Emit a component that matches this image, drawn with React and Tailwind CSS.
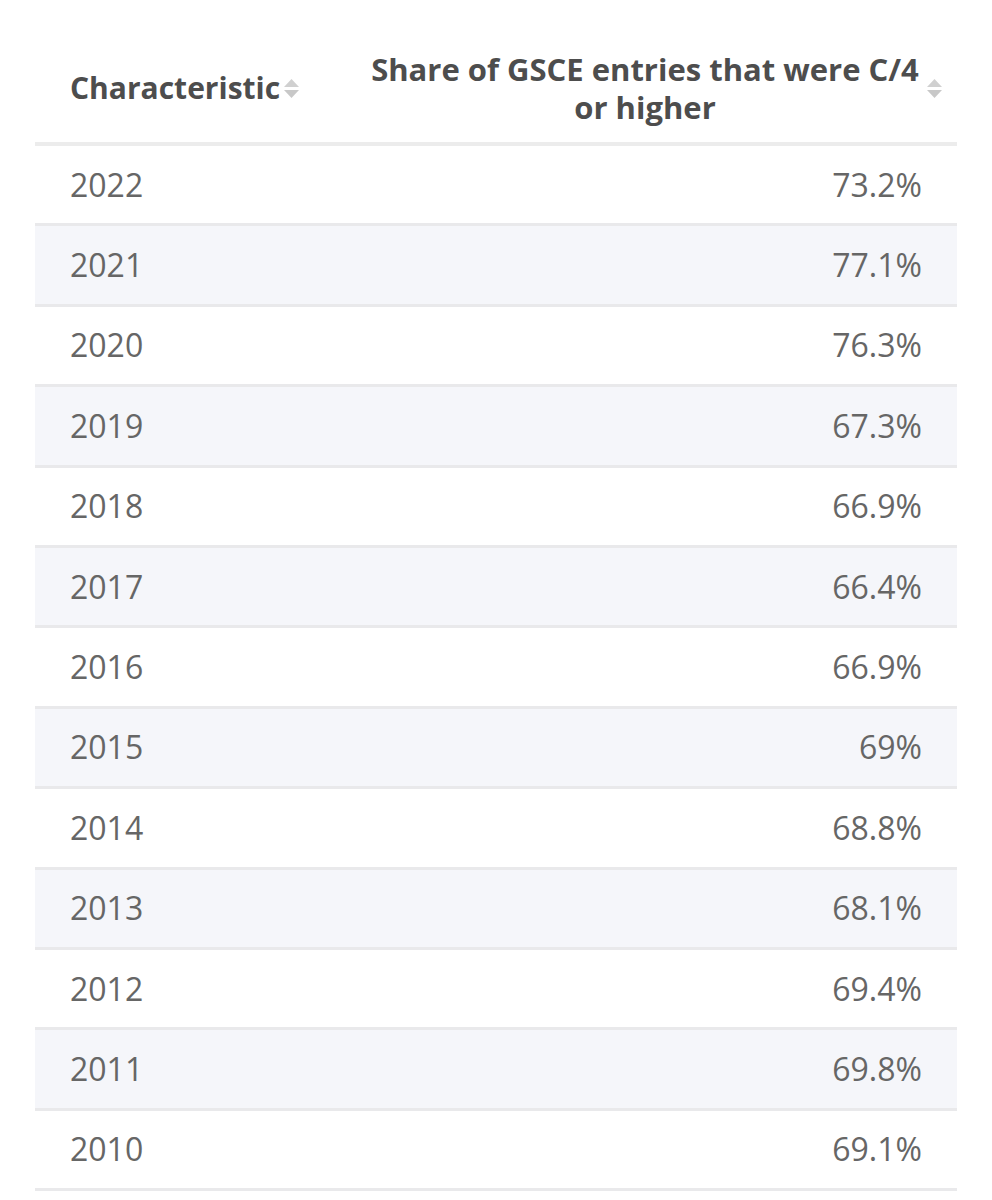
import React from "react";

const rows = [
  ["2022", "73.2%"],
  ["2021", "77.1%"],
  ["2020", "76.3%"],
  ["2019", "67.3%"],
  ["2018", "66.9%"],
  ["2017", "66.4%"],
  ["2016", "66.9%"],
  ["2015", "69%"],
  ["2014", "68.8%"],
  ["2013", "68.1%"],
  ["2012", "69.4%"],
  ["2011", "69.8%"],
  ["2010", "69.1%"],
];

function SortIcon() {
  return (
    <svg width="17" height="21" viewBox="0 0 17 21" className="shrink-0">
      <path d="M8.5 1 L16 9 L1 9 Z" fill="#d0d0d0" />
      <path d="M1 12 L16 12 L8.5 20 Z" fill="#c8c8c8" />
    </svg>
  );
}

export default function App() {
  return (
    <div
      className="w-[992px] min-h-[1200px] bg-white pt-[34px]"
      style={{ fontFamily: '"Open Sans", "Liberation Sans", sans-serif' }}
    >
      <div className="mx-[35px] w-[922px]">
        <div className="flex h-[112px] items-center border-b-4 border-[#ececec]">
          <div className="flex w-[305px] items-center pl-[35px]">
            <span className="text-[30px] font-bold leading-[38px] text-[#4d4d4d]">Characteristic</span>
            <span className="ml-[3px]">
              <SortIcon />
            </span>
          </div>
          <div className="flex flex-1 items-center pl-[29px] pr-[14px]">
            <span className="flex-1 text-center text-[31px] font-bold leading-[38px] text-[#4d4d4d]">
              Share of GSCE entries that were C/4 or higher
            </span>
            <span className="ml-[5px]">
              <SortIcon />
            </span>
          </div>
        </div>
        {rows.map(([year, val], i) => (
          <div
            key={year}
            className={`flex h-[80.4px] items-center border-b-[3px] border-[#e9e9eb] px-[35px] text-[32px] leading-none text-[#666666] ${
              i % 2 === 1 ? "bg-[#f5f6fa]" : "bg-white"
            }`}
          >
            <span className="flex-1">{year}</span>
            <span>{val}</span>
          </div>
        ))}
      </div>
    </div>
  );
}
